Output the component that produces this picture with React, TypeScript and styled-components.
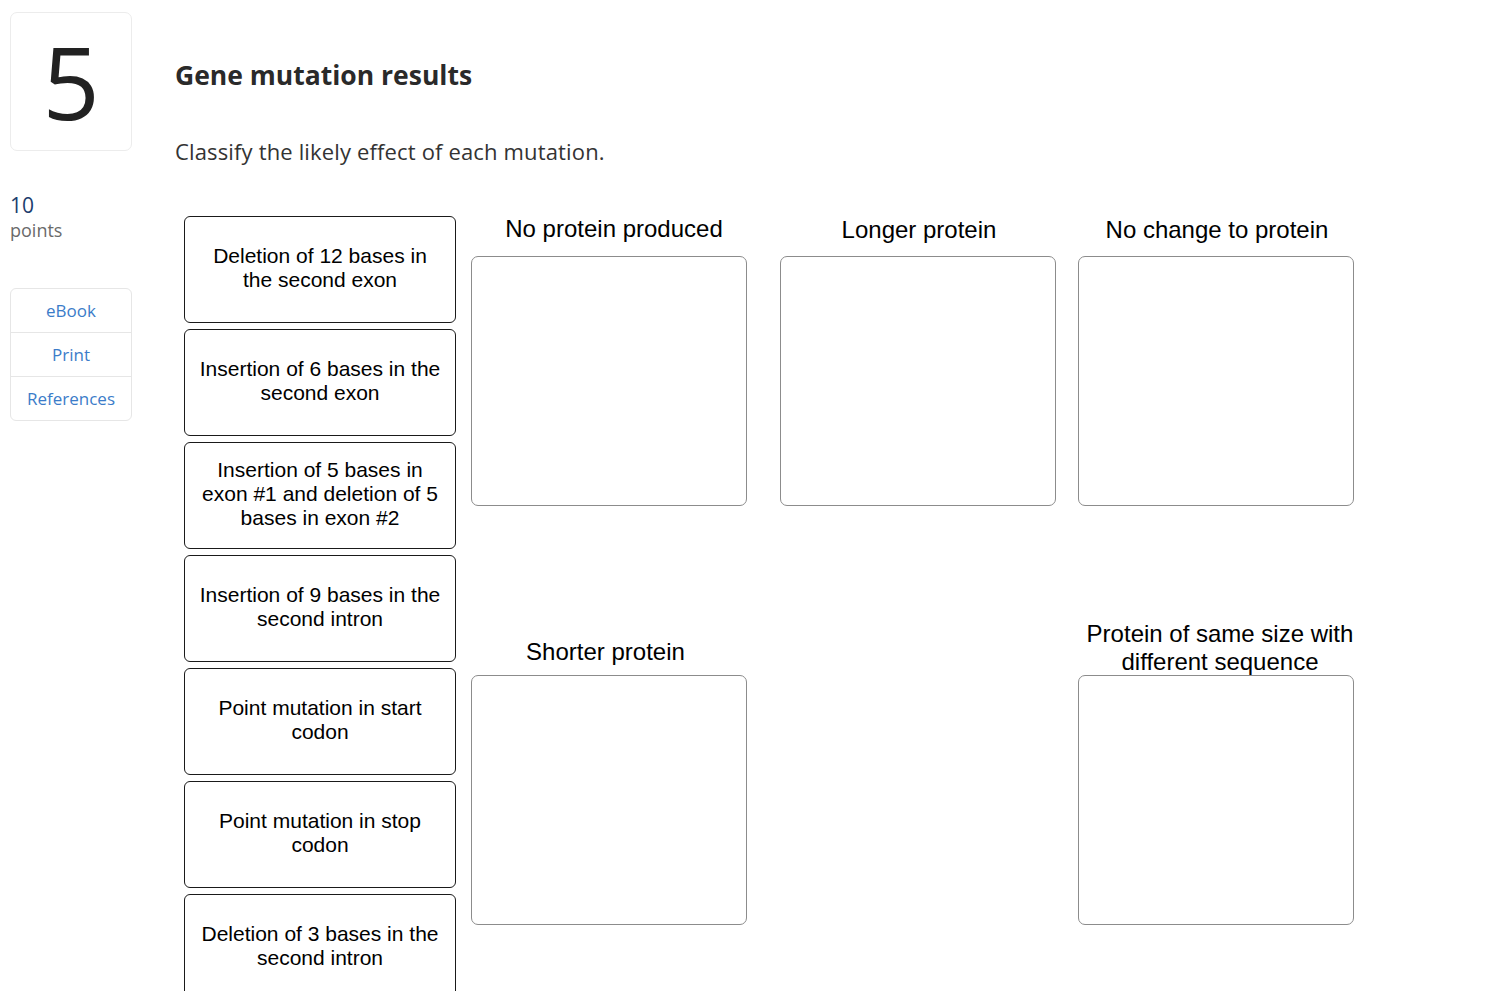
import React from "react";
import styled, { createGlobalStyle } from "styled-components";

const GlobalStyle = createGlobalStyle`
  html, body {
    margin: 0;
    padding: 0;
    background: #ffffff;
  }
  body {
    font-family: "Open Sans", Lato, "Liberation Sans", sans-serif;
    color: #222;
  }
`;

const Page = styled.div`
  display: flex;
  align-items: flex-start;
  padding: 12px 0 0 10px;
  min-height: 979px;
  box-sizing: border-box;
`;

const Sidebar = styled.aside`
  width: 122px;
  flex: 0 0 122px;
  display: flex;
  flex-direction: column;
`;

const NumberBox = styled.div`
  height: 139px;
  border: 1px solid #ececec;
  border-radius: 7px;
  box-sizing: border-box;
  display: flex;
  align-items: center;
  justify-content: center;
  font-family: "Open Sans", Lato, sans-serif;
  font-weight: 400;
  font-size: 100px;
  line-height: 1;
  color: #222;
  padding-bottom: 2px;
`;

const Points = styled.div`
  margin-top: 41px;
  display: flex;
  flex-direction: column;
`;

const PointsValue = styled.span`
  font-size: 21px;
  line-height: 26px;
  color: #1b3d6d;
`;

const PointsLabel = styled.span`
  font-size: 18px;
  line-height: 24px;
  color: #6a6a6a;
`;

const LinkBox = styled.nav`
  margin-top: 46px;
  border: 1px solid #e6e6e6;
  border-radius: 6px;
  display: flex;
  flex-direction: column;
`;

const SideLink = styled.a<{ $last?: boolean }>`
  height: 43px;
  display: flex;
  align-items: center;
  justify-content: center;
  font-size: 17px;
  color: #3b7cc9;
  text-decoration: none;
  border-bottom: ${(p) => (p.$last ? "none" : "1px solid #e6e6e6")};
  cursor: pointer;
`;

const Main = styled.main`
  margin-left: 43px;
  padding-top: 46px;
  flex: 1;
  display: flex;
  flex-direction: column;
`;

const Heading = styled.h1`
  margin: 0;
  font-size: 26.5px;
  line-height: 34px;
  font-weight: 700;
  color: #2a2a2a;
`;

const Prompt = styled.p`
  margin: 44px 0 0 0;
  font-size: 22px;
  line-height: 30px;
  letter-spacing: 0.15px;
  color: #333;
`;

const Workspace = styled.div`
  margin-top: 49px;
  padding-left: 9px;
  display: flex;
  align-items: flex-start;
  font-family: "Liberation Sans", Arial, sans-serif;
  color: #000;
`;

const CardList = styled.div`
  width: 272px;
  flex: 0 0 272px;
  display: flex;
  flex-direction: column;
  gap: 6px;
  margin-top: 1px;
`;

const Card = styled.div`
  height: 107px;
  box-sizing: border-box;
  border: 1px solid #1a1a1a;
  border-radius: 6px;
  padding: 0 12px 3px;
  display: flex;
  align-items: center;
  justify-content: center;
  text-align: center;
  font-size: 21px;
  line-height: 24px;
  background: #fff;
  cursor: grab;
`;

const Bins = styled.div`
  margin-left: 15px;
  display: grid;
  grid-template-columns: 309px 298px 276px;
  row-gap: 114px;
  align-items: end;
`;

const Bin = styled.section<{ $col: number }>`
  grid-column: ${(p) => p.$col};
  width: 276px;
  display: flex;
  flex-direction: column;
`;

const BinTitle = styled.h2<{ $gap: number; $nudge: number }>`
  margin: 0 0 ${(p) => p.$gap}px 0;
  padding-left: ${(p) => Math.max(p.$nudge, 0)}px;
  padding-right: ${(p) => Math.max(-p.$nudge, 0)}px;
  font-size: 24px;
  line-height: 28px;
  font-weight: 400;
  text-align: center;
  color: #000;
`;

const DropZone = styled.div`
  height: 250px;
  box-sizing: border-box;
  border: 1px solid #8c8c8c;
  border-radius: 7px;
  background: #fff;
`;

const cards = [
  "Deletion of 12 bases in the second exon",
  "Insertion of 6 bases in the second exon",
  "Insertion of 5 bases in exon #1 and deletion of 5 bases in exon #2",
  "Insertion of 9 bases in the second intron",
  "Point mutation in start codon",
  "Point mutation in stop codon",
  "Deletion of 3 bases in the second intron",
];

const bins = [
  { title: "No protein produced", col: 1, gap: 13, nudge: 10 },
  { title: "Longer protein", col: 2, gap: 12, nudge: 2 },
  { title: "No change to protein", col: 3, gap: 12, nudge: 2 },
  { title: "Shorter protein", col: 1, gap: 9, nudge: -7 },
  { title: "Protein of same size with different sequence", col: 3, gap: -1, nudge: 8 },
];

export default function App() {
  return (
    <>
      <GlobalStyle />
      <Page>
        <Sidebar>
          <NumberBox>5</NumberBox>
          <Points>
            <PointsValue>10</PointsValue>
            <PointsLabel>points</PointsLabel>
          </Points>
          <LinkBox>
            <SideLink>eBook</SideLink>
            <SideLink>Print</SideLink>
            <SideLink $last>References</SideLink>
          </LinkBox>
        </Sidebar>
        <Main>
          <Heading>Gene mutation results</Heading>
          <Prompt>Classify the likely effect of each mutation.</Prompt>
          <Workspace>
            <CardList>
              {cards.map((c) => (
                <Card key={c}>{c}</Card>
              ))}
            </CardList>
            <Bins>
              {bins.map((b) => (
                <Bin key={b.title} $col={b.col}>
                  <BinTitle $gap={b.gap} $nudge={b.nudge}>{b.title}</BinTitle>
                  <DropZone />
                </Bin>
              ))}
            </Bins>
          </Workspace>
        </Main>
      </Page>
    </>
  );
}
